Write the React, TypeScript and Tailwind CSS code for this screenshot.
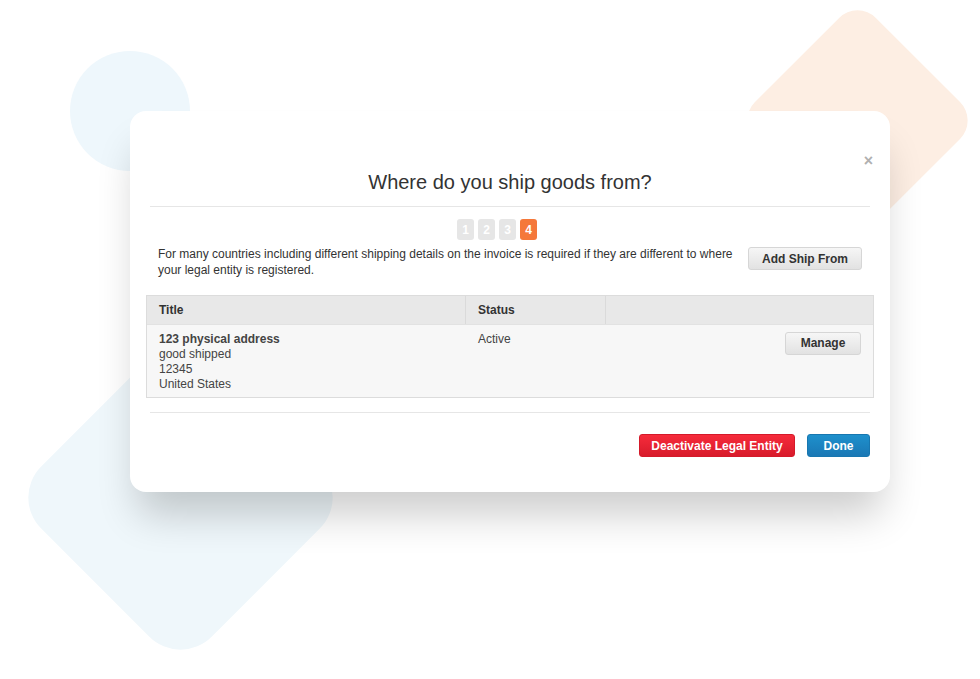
import React from 'react';

const steps = [1, 2, 3, 4];

const App: React.FC = () => {
  const current = 4;

  return (
    <div className="relative w-[980px] h-[679px] overflow-hidden bg-white font-['Liberation_Sans',Arial,sans-serif] text-[#333]">
      {/* Decorative background shapes */}
      <div className="absolute left-[70px] top-[51px] w-[120px] h-[120px] rounded-full bg-[#eef7fc]" />
      <div className="absolute left-[772px] top-[35px] w-[171px] h-[171px] rotate-45 rounded-[26px] bg-[#fdeee3]" />
      <div className="absolute left-[60px] top-[377px] w-[241px] h-[241px] rotate-45 rounded-[44px] bg-[#eff7fb]" />

      {/* Modal */}
      <div className="relative ml-[130px] mt-[111px] w-[760px] rounded-[16px] bg-white px-5 pt-[57px] pb-[35px] shadow-[0_30px_40px_-8px_rgba(0,0,0,0.2)]">
        <button className="absolute right-[17px] top-[42px] text-[16px] font-bold leading-none text-[#b0b0b0]">
          ×
        </button>

        <h2 className="text-center text-[20px] leading-[28px] text-[#333]">
          Where do you ship goods from?
        </h2>
        <div className="mt-[10px] h-px bg-[#e6e6e6]" />

        {/* Steps */}
        <div className="mt-[12px] flex justify-center gap-[4px] pr-[26px]">
          {steps.map((s) => (
            <div
              key={s}
              className={`flex h-[21px] w-[17px] items-center justify-center rounded-[3px] text-[12px] font-bold text-white ${
                s === current ? 'bg-[#f5783a]' : 'bg-[#e6e6e6]'
              }`}
            >
              {s}
            </div>
          ))}
        </div>

        {/* Description */}
        <div className="mt-[6px] flex items-start justify-between px-2">
          <p className="w-[580px] text-[12px] leading-[16px] text-[#333]">
            For many countries including different shipping details on the invoice is required if they are different to where your legal entity is registered.
          </p>
          <button className="mt-px h-[23px] w-[114px] rounded-[3px] border border-[#d6d6d6] bg-gradient-to-b from-[#f6f6f6] to-[#e2e2e2] text-[12px] font-bold text-[#333]">
            Add Ship From
          </button>
        </div>

        {/* Table */}
        <div className="-mx-1 mt-[17px] border border-[#dcdcdc]">
          <div className="flex h-[28px] bg-[#e8e8e8] text-[12px] font-bold text-[#333]">
            <div className="flex w-[319px] items-center border-r border-[#dadada] pl-3">Title</div>
            <div className="flex w-[140px] items-center border-r border-[#dadada] pl-3">Status</div>
            <div className="flex-1" />
          </div>
          <div className="flex border-t border-[#e2e2e2] bg-[#f7f7f7] text-[12px] leading-[15px] text-[#444]">
            <div className="w-[319px] pl-3 pt-[7px] pb-[5px]">
              <div className="font-bold">123 physical address</div>
              <div>good shipped</div>
              <div>12345</div>
              <div>United States</div>
            </div>
            <div className="w-[140px] pl-3 pt-[7px]">Active</div>
            <div className="flex flex-1 justify-end pr-[12px] pt-[7px]">
              <button className="h-[23px] w-[76px] rounded-[3px] border border-[#d6d6d6] bg-gradient-to-b from-[#f6f6f6] to-[#e2e2e2] text-[12px] font-bold text-[#333]">
                Manage
              </button>
            </div>
          </div>
        </div>

        <div className="mt-[14px] h-px bg-[#e6e6e6]" />

        {/* Footer */}
        <div className="mt-[21px] flex justify-end gap-[12px]">
          <button className="h-[23px] w-[156px] rounded-[3px] border border-[#d41a2a] bg-gradient-to-b from-[#f62b3b] to-[#d81b2b] text-[12px] font-bold text-white">
            Deactivate Legal Entity
          </button>
          <button className="h-[23px] w-[63px] rounded-[3px] border border-[#1877b0] bg-gradient-to-b from-[#1e90cc] to-[#1a78b5] text-[12px] font-bold text-white">
            Done
          </button>
        </div>
      </div>
    </div>
  );
};

export default App;
